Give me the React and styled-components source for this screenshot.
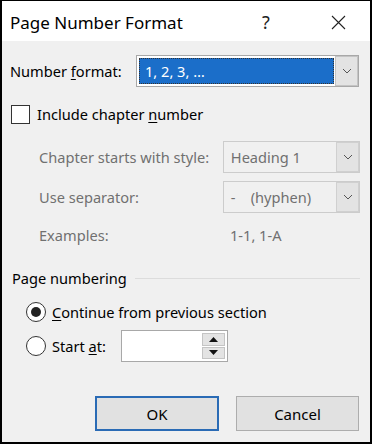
import React from "react";
import styled, { createGlobalStyle } from "styled-components";

const Global = createGlobalStyle`
  html, body { margin: 0; padding: 0; background: #000; }
  body { font-family: "Noto Sans", "Open Sans", sans-serif; }
`;

const Win = styled.div`
  width: 368px;
  height: 441px;
  margin: 1px 2px 2px 2px;
  background: #f0f0f0;
  display: flex;
  flex-direction: column;
  color: #000;
  font-size: 14.6px;
  overflow: hidden;
`;

const TitleBar = styled.div`
  height: 40px;
  background: #fff;
  display: flex;
  align-items: center;
  padding-left: 8px;
  flex-shrink: 0;
`;

const Title = styled.div`
  flex: 1;
  font-size: 17px;
  margin-top: 2px;
`;

const TitleBtn = styled.div`
  width: ${(p) => p.w}px;
  display: flex;
  justify-content: center;
  align-items: center;
  font-size: 18px;
  color: #222;
  margin-top: 2px;
`;

const Body = styled.div`
  padding: 14px 10px 0 8px;
  display: flex;
  flex-direction: column;
`;

const Row = styled.div`
  display: flex;
  align-items: center;
  height: ${(p) => p.h || 32}px;
  margin-top: ${(p) => p.mt || 0}px;
  padding-left: ${(p) => p.pl || 0}px;
`;

const Label = styled.div`
  width: ${(p) => p.w}px;
  color: ${(p) => (p.dim ? "#707070" : "#000")};
  white-space: nowrap;
`;

const Select = styled.div`
  height: 32px;
  width: ${(p) => p.w}px;
  box-sizing: border-box;
  border: 1px solid ${(p) => (p.dim ? "#cccccc" : "#a8a8a8")};
  background: ${(p) => (p.dim ? "#f0f0f0" : "#fff")};
  display: flex;
  align-items: stretch;
  padding: 2px;
  gap: 1px;
`;

const SelValue = styled.div`
  flex: 1;
  display: flex;
  align-items: center;
  padding-left: ${(p) => (p.sel ? 6 : 5)}px;
  background: ${(p) => (p.sel ? "#1b6ec9" : "transparent")};
  color: ${(p) => (p.sel ? "#fff" : "#707070")};
  outline: ${(p) => (p.sel ? "1px dotted #333" : "none")};
  outline-offset: -1px;
  white-space: pre;
`;

const DropBtn = styled.div`
  width: 23px;
  box-sizing: border-box;
  background: #e3e3e3;
  border: 1px solid ${(p) => (p.dim ? "#d0d0d0" : "#c4c4c4")};
  margin: -2px -2px -2px 0;
  display: flex;
  align-items: center;
  justify-content: center;
`;

const Check = styled.div`
  width: 19px;
  height: 19px;
  box-sizing: border-box;
  border: 1px solid #333;
  background: #fff;
  margin-right: 7px;
`;

const Section = styled.div`
  display: flex;
  align-items: center;
  gap: 8px;
  height: 24px;
  margin-top: ${(p) => p.mt}px;
`;

const Rule = styled.div`
  flex: 1;
  height: 1px;
  background: #dcdcdc;
`;

const Radio = styled.div`
  width: 20px;
  height: 20px;
  box-sizing: border-box;
  border-radius: 50%;
  border: 1px solid #333;
  background: #fff;
  display: flex;
  align-items: center;
  justify-content: center;
  margin-right: 6px;
  &::after {
    content: "";
    display: ${(p) => (p.on ? "block" : "none")};
    width: 10px;
    height: 10px;
    border-radius: 50%;
    background: #222;
  }
`;

const U = styled.span`
  text-decoration: underline;
  text-decoration-thickness: 1px;
  text-underline-offset: 2px;
`;

const Spin = styled.div`
  width: 107px;
  height: 32px;
  box-sizing: border-box;
  border: 1px solid #a8a8a8;
  background: #fff;
  display: flex;
  justify-content: flex-end;
  padding: 2px;
`;

const SpinCol = styled.div`
  width: 23px;
  display: flex;
  flex-direction: column;
  gap: 1px;
`;

const SpinBtn = styled.div`
  flex: 1;
  background: #e3e3e3;
  border: 1px solid #c4c4c4;
  display: flex;
  align-items: center;
  justify-content: center;
`;

const Buttons = styled.div`
  display: flex;
  justify-content: flex-end;
  gap: 17px;
  margin-top: 34px;
  padding-right: 1px;
`;

const Btn = styled.div`
  width: ${(p) => (p.primary ? 124 : 123)}px;
  height: 35px;
  box-sizing: border-box;
  border: ${(p) => (p.primary ? "2px solid #2a6bb5" : "1px solid #adadad")};
  background: #e1e1e1;
  display: flex;
  align-items: center;
  justify-content: center;
  font-size: 15px;
`;

const Chevron = () => (
  <svg width="10" height="6" viewBox="0 0 10 6">
    <path d="M1 1 L5 5 L9 1" fill="none" stroke="#555" strokeWidth="1" />
  </svg>
);

const Tri = ({ up }) => (
  <svg width="9" height="5" viewBox="0 0 9 5">
    <path d={up ? "M0 5 L4.5 0 L9 5 Z" : "M0 0 L4.5 5 L9 0 Z"} fill="#111" />
  </svg>
);

const CloseX = () => (
  <svg width="15" height="15" viewBox="0 0 15 15">
    <path d="M1 1 L14 14 M14 1 L1 14" stroke="#222" strokeWidth="1.1" fill="none" />
  </svg>
);

export default function App() {
  return (
    <>
      <Global />
      <Win>
        <TitleBar>
          <Title>Page Number Format</Title>
          <TitleBtn w={80}>?</TitleBtn>
          <TitleBtn w={64}>
            <CloseX />
          </TitleBtn>
        </TitleBar>
        <Body>
          <Row>
            <Label w={126}>
              Number <U>f</U>ormat:
            </Label>
            <Select w={223}>
              <SelValue sel>1, 2, 3, …</SelValue>
              <DropBtn>
                <Chevron />
              </DropBtn>
            </Select>
          </Row>
          <Row h={22} mt={16} pl={1}>
            <Check />
            <span>
              Include chapter <U>n</U>umber
            </span>
          </Row>
          <Row mt={16} pl={29}>
            <Label w={185} dim>
              Chapter starts with style:
            </Label>
            <Select w={138} dim>
              <SelValue>Heading 1</SelValue>
              <DropBtn dim>
                <Chevron />
              </DropBtn>
            </Select>
          </Row>
          <Row mt={8} pl={29}>
            <Label w={185} dim>
              Use separator:
            </Label>
            <Select w={138} dim>
              <SelValue>-    (hyphen)</SelValue>
              <DropBtn dim>
                <Chevron />
              </DropBtn>
            </Select>
          </Row>
          <Row h={24} mt={10} pl={29}>
            <Label w={191} dim>
              Examples:
            </Label>
            <Label dim>1-1, 1-A</Label>
          </Row>
          <Section mt={19}>
            <span style={{ marginLeft: 2 }}>Page numbering</span>
            <Rule />
          </Section>
          <Row h={24} mt={10} pl={16}>
            <Radio on />
            <span>
              <U>C</U>ontinue from previous section
            </span>
          </Row>
          <Row mt={6} pl={16}>
            <Radio />
            <Label w={69}>
              Start <U>a</U>t:
            </Label>
            <Spin>
              <SpinCol>
                <SpinBtn>
                  <Tri up />
                </SpinBtn>
                <SpinBtn>
                  <Tri />
                </SpinBtn>
              </SpinCol>
            </Spin>
          </Row>
          <Buttons>
            <Btn primary>OK</Btn>
            <Btn>Cancel</Btn>
          </Buttons>
        </Body>
      </Win>
    </>
  );
}
